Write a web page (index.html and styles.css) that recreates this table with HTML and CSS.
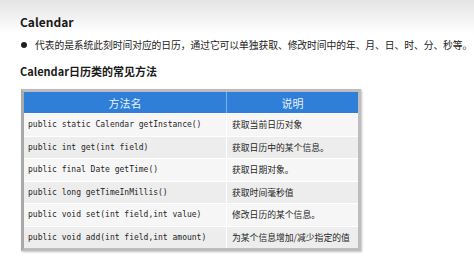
FILE: index.html
```html
<!DOCTYPE html>
<html lang="zh">
<head>
<meta charset="utf-8">
<link rel="stylesheet" href="styles.css">
</head>
<body>
<div class="slide">
  <div class="topband"></div>
  <div class="content">
    <h1 class="title">Calendar</h1>
    <div class="bullet-line"><span class="dot"></span><span>代表的是系统此刻时间对应的日历，通过它可以单独获取、修改时间中的年、月、日、时、分、秒等。</span></div>
    <h2 class="subtitle">Calendar日历类的常见方法</h2>
    <div class="table">
      <div class="th">方法名</div><div class="th th2">说明</div>
      <div class="td code odd">public static Calendar getInstance()</div><div class="td desc odd">获取当前日历对象</div>
      <div class="td code even">public int get(int field)</div><div class="td desc even">获取日历中的某个信息。</div>
      <div class="td code odd">public final Date getTime()</div><div class="td desc odd">获取日期对象。</div>
      <div class="td code even">public long getTimeInMillis()</div><div class="td desc even">获取时间毫秒值</div>
      <div class="td code odd">public void set(int field,int value)</div><div class="td desc odd">修改日历的某个信息。</div>
      <div class="td code even">public void add(int field,int amount)</div><div class="td desc even">为某个信息增加/减少指定的值</div>
    </div>
  </div>
</div>
</body>
</html>
```
FILE: styles.css
```css
html, body { margin: 0; padding: 0; background: #fff; }
.slide { width: 474px; height: 279px; position: relative; overflow: hidden; background: #fff; font-family: "Noto Sans CJK SC", "Open Sans", sans-serif; color: #1a1a1a; }
.topband { height: 34px; background: linear-gradient(#e4e4e4, #f4f4f4 60%, #ffffff); margin-bottom: -34px; }
.content { position: relative; padding: 13px 0 0 20px; }
.title { margin: 0; font-size: 12px; font-weight: 700; line-height: 18px; height: 18px; }
.bullet-line { margin-top: 6px; display: flex; align-items: center; font-size: 9.8px; line-height: 16px; color: #222; letter-spacing: -0.08px; white-space: nowrap; }
.dot { width: 6px; height: 6px; border-radius: 50%; background: #222; margin: 0 8px 0 1px; flex: none; }
.subtitle { margin: 9px 0 0 0; font-size: 11px; font-weight: 700; line-height: 18px; }
.table { margin-top: 9px; margin-left: 1px; width: 334px; display: grid; grid-template-columns: 202px 132px; grid-template-rows: 21px repeat(6, 21.5px); row-gap: 1px; background: #fff; border: 3px solid #bdbdbd; border-left-color: #a9a9a9; box-shadow: 1px 1px 2px rgba(0,0,0,0.25); }
.th { background: #2f7fd8; color: #e8f0fb; font-size: 11px; display: flex; align-items: center; justify-content: center; }
.th2 { border-left: 1px solid #7fb2ec; }
.td { display: flex; align-items: center; padding-left: 4px; }
.td.desc { border-left: 1px solid #fff; padding-left: 5px; font-size: 8.8px; color: #1e1e1e; }
.td.code { font-family: "DejaVu Sans Mono", monospace; font-size: 8px; color: #1e1e1e; }
.odd { background: #f6f6f6; }
.even { background: #ededed; }
```
